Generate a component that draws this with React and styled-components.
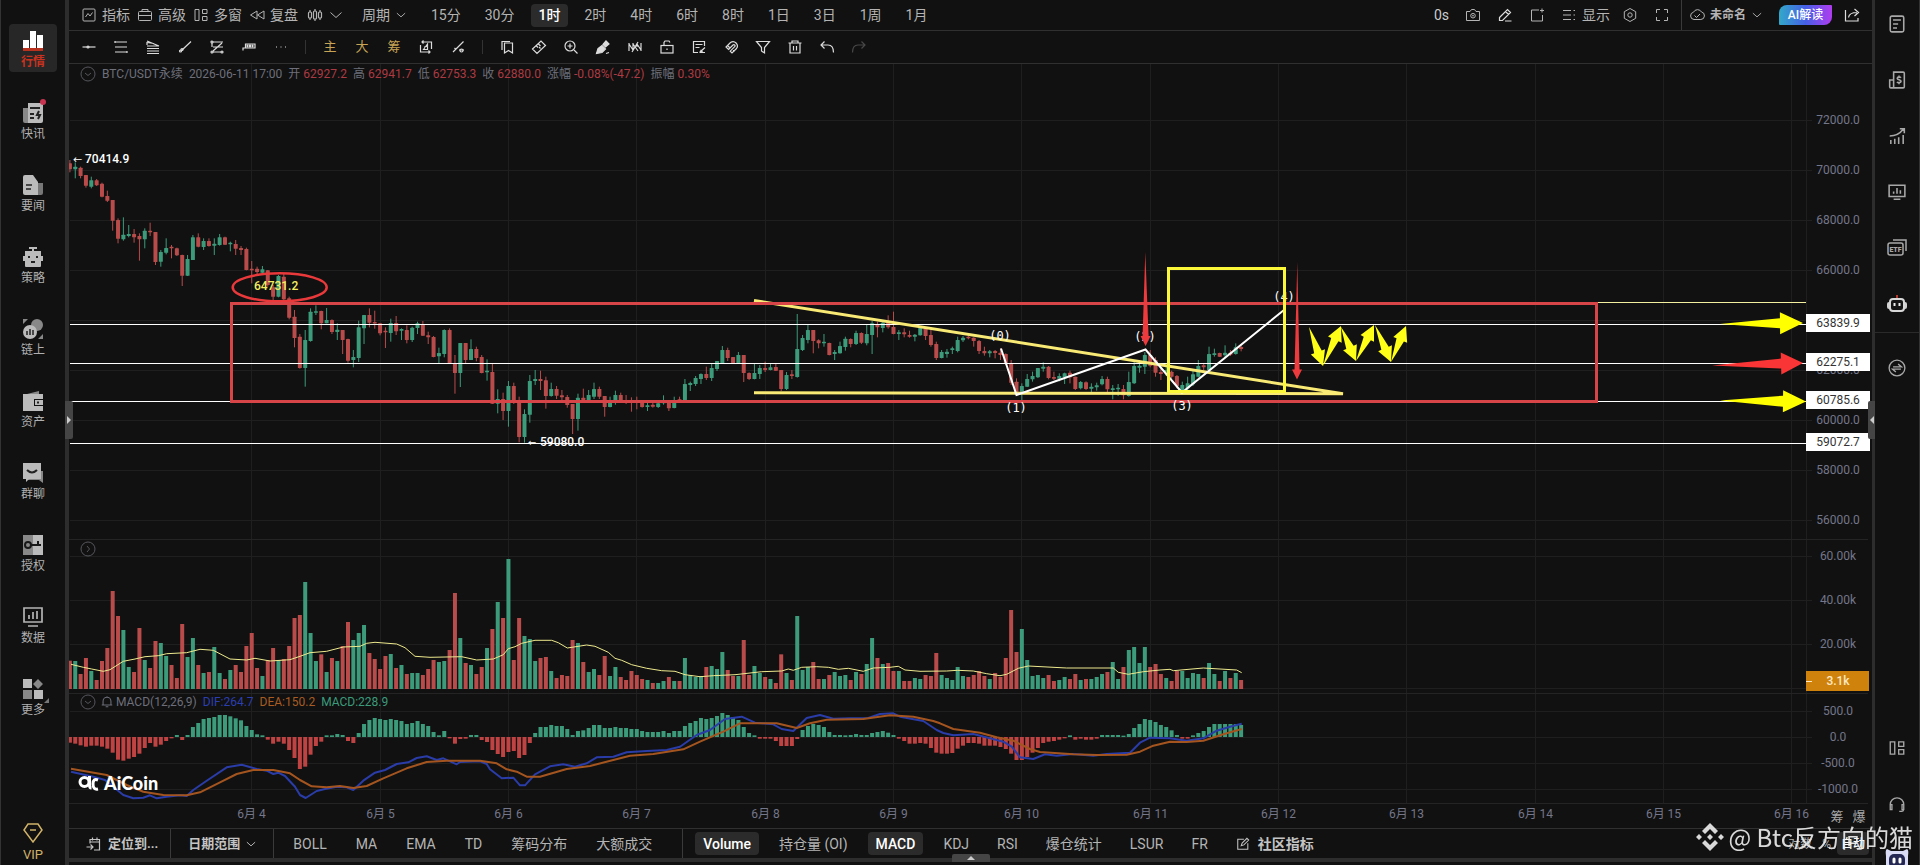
import React from 'react'
import styled, { createGlobalStyle, css } from 'styled-components'

const UP = '#3c9b7b'
const DOWN = '#b94b4b'
const SANS = 'Roboto, "Noto Sans CJK SC", sans-serif'

const GlobalStyle = createGlobalStyle`
    * { box-sizing: border-box; }

    body {
        margin: 0;
        background: #111;
        color: #b4b4b4;
        font-family: ${SANS};
        overflow: hidden;
    }

    button {
        margin: 0;
        padding: 0;
        border: 0;
        background: none;
        color: inherit;
        font: inherit;
        white-space: nowrap;
        cursor: pointer;
    }
`

/* ---------- market data: dir + high,top,bottom,low (3 units per pixel) ---------- */

const CANDLES = `
r480,490,508,517 g487,500,508,535 r500,503,528,535 r525,525,557,563 g530,541,560,565
r537,541,556,558 r548,551,590,592 r572,588,602,606 r600,600,662,692 r655,660,716,730
g652,704,718,722 g675,702,708,712 r687,702,712,728 r700,708,718,782 g685,692,718,745
r668,692,697,708 r696,696,786,795 g750,756,785,800 g715,744,758,763 r735,740,744,775
r743,745,766,768 r764,765,827,858 g765,777,827,828 g705,712,780,780 r700,712,740,742
g715,723,741,750 r715,723,738,740 g715,731,737,765 g702,712,735,737 r710,712,734,735
g725,728,733,754 r720,732,746,765 r738,744,750,765 r743,747,810,811 r783,806,810,850
r800,806,816,823 g798,808,818,825 r810,811,855,860 r855,862,890,903 g825,828,890,892
r820,830,898,905 r890,895,953,958 r930,950,1014,1042 r1002,1010,1104,1106 g990,1020,1104,1160
g925,935,1023,1025 g916,934,938,945 r932,933,970,988 g924,960,970,970 r958,960,996,1002
g970,989,996,1020 r990,990,1020,1062 r1016,1017,1082,1088 g1050,1071,1080,1102 g962,982,1074,1086
g945,945,985,1032 r925,945,968,982 r932,966,970,986 r970,970,1000,1006 r982,992,996,1044
g956,969,999,1025 r948,969,994,1005 g985,987,992,1020 r976,990,1020,1030 g980,983,1020,1026
g965,970,984,1002 r963,973,1007,1008 r995,1006,1012,1032 r1008,1011,1071,1072 g1043,1059,1069,1092
g988,990,1062,1072 r985,990,1089,1091 r1065,1090,1119,1181 g1029,1029,1119,1161 r1029,1029,1080,1092
g1018,1047,1080,1080 r1040,1047,1074,1084 r1065,1071,1119,1120 g1078,1112,1117,1142 r1092,1116,1211,1212
g1168,1197,1211,1240 r1178,1197,1233,1260 g1143,1158,1233,1280 r1148,1158,1206,1212 r1190,1206,1311,1327
g1228,1242,1311,1328 g1125,1143,1244,1268 g1110,1137,1143,1155 r1112,1137,1143,1170 r1130,1141,1188,1226
g1148,1167,1188,1190 r1158,1167,1187,1197 r1170,1186,1192,1208 r1185,1191,1215,1223 r1212,1212,1257,1302
g1181,1193,1257,1292 r1166,1193,1200,1205 g1170,1185,1200,1203 g1148,1167,1190,1197 r1160,1167,1190,1197
r1188,1188,1221,1250 g1190,1206,1221,1222 g1172,1185,1206,1214 r1178,1185,1202,1208 r1185,1200,1206,1212
r1192,1202,1208,1235 r1190,1202,1208,1228 r1200,1206,1221,1223 g1206,1216,1221,1233 r1200,1214,1220,1223
g1205,1210,1221,1224 g1186,1202,1210,1214 r1205,1205,1225,1233 g1190,1200,1224,1225 r1190,1198,1202,1206
g1137,1152,1200,1202 g1145,1149,1155,1173 g1128,1134,1152,1158 g1120,1122,1137,1152 r1100,1122,1134,1140
g1092,1104,1134,1143 g1083,1083,1107,1113 g1038,1050,1089,1091 r1043,1050,1074,1083 r1071,1071,1089,1090
g1056,1065,1089,1091 r1065,1065,1119,1146 r1117,1119,1137,1140 g1092,1119,1137,1138 g1095,1104,1122,1137
r1085,1104,1110,1116 g1090,1102,1110,1111 r1092,1101,1112,1113 r1110,1110,1167,1173 g1116,1125,1167,1170
r1110,1123,1128,1137 g942,1047,1131,1133 g1005,1014,1050,1053 g975,990,1020,1030 r990,990,1023,1060
r1018,1021,1030,1045 g1002,1025,1030,1040 r1028,1029,1065,1066 g1050,1056,1062,1080 g1025,1038,1060,1061
g1010,1016,1041,1052 r1015,1017,1032,1042 g992,999,1032,1035 r997,999,1028,1032 g975,1002,1030,1036
g963,970,1005,1062 r965,972,982,1012 g960,968,984,997 r946,968,982,986 r935,981,1002,1003
g990,997,1002,1020 r985,997,1003,1012 r992,1005,1010,1013 g1002,1004,1010,1024 g980,984,1006,1007
r982,986,1008,1020 r988,1005,1035,1040 r1025,1032,1074,1080 g1050,1056,1074,1075 g1047,1055,1062,1073
g1040,1045,1050,1062 g1010,1020,1053,1057 g1008,1013,1021,1026 r1008,1010,1015,1018 r1012,1013,1023,1040
r1020,1023,1053,1062 r1040,1053,1060,1067 g1050,1054,1060,1072 r1050,1053,1059,1075 r1045,1058,1065,1080
r1060,1062,1092,1095 r1080,1090,1148,1155 r1135,1145,1180,1188 g1150,1158,1175,1200 g1122,1137,1160,1161
g1115,1128,1138,1145 g1104,1104,1132,1134 g1087,1100,1106,1115 r1098,1100,1134,1138 r1115,1131,1136,1140
g1120,1128,1136,1144 g1118,1120,1132,1152 r1112,1118,1132,1150 r1130,1130,1167,1170 g1143,1146,1165,1168
r1144,1147,1167,1170 g1150,1160,1166,1178 g1148,1156,1162,1172 g1128,1137,1153,1156 r1130,1137,1168,1176
g1155,1165,1170,1198 g1152,1163,1168,1188 r1155,1167,1186,1198 g1115,1146,1188,1190 g1086,1098,1150,1152
g1080,1097,1103,1118 g1056,1065,1100,1122 r1050,1065,1097,1102 r1072,1080,1118,1130 r1105,1116,1122,1140
g1100,1110,1118,1128 r1112,1115,1130,1136 r1125,1128,1158,1165 g1145,1155,1172,1178 g1130,1150,1165,1170
g1110,1123,1153,1158 g1080,1098,1130,1132 r1090,1096,1102,1110 g1040,1062,1110,1112 g1046,1060,1065,1070
r1058,1059,1070,1071 g1036,1058,1066,1074 r1050,1058,1064,1068 g1030,1042,1062,1064 r1037,1041,1047,1054
`.trim().split(/\s+/).map(row => ({
    color: row[0] === 'g' ? UP : DOWN,
    y: row.slice(1).split(',').map(n => n / 3)
}))

const VOLUME = `
392 393 432 384 423 450 393 354 183 258 300 411 426 294 390 414 333 339 378 405 444 282 381 324 405 429 426 351 429 447
420 405 426 348 309 414 438 390 354 390 387 348 264 255 156 309 393 373 426 384 393 348 276 330 309 285 369 387 417 378
372 414 405 432 429 429 435 417 390 396 393 360 189 324 399 405 432 411 354 297 216 264 87 390 264 318 327 393 384 381
423 444 435 438 330 339 396 426 417 435 378 438 411 441 450 423 435 447 450 459 459 453 441 453 453 384 435 441 438 411
408 417 366 420 438 438 330 435 408 429 441 447 459 373 429 450 258 420 411 396 447 447 435 426 438 435 450 426 432 402
324 384 402 399 423 423 453 453 444 447 435 438 369 435 444 450 411 438 441 435 423 438 447 429 441 384 240 366 297 390
438 435 444 435 453 450 441 447 432 450 447 447 441 432 426 396 447 411 360 351 399 351 411 402 432 444 453 423 423 444
429 432 444 399 432 453 423 444 429 450
`.trim().split(/\s+/).map(n => (477 - n) / 3)

const HISTOGRAM = `
-17 -20 -25 -29 -26 -26 -29 -35 -47 -68 -71 -65 -60 -50 -33 -18 -29 -23 -12 -4 6 -9 6 30 42 54 57 60 66 66
62 56 50 33 21 8 5 -8 -20 -14 -20 -39 -63 -96 -89 -53 -27 -14 5 5 9 6 -12 -18 12 39 51 57 54 51
54 51 48 39 42 48 39 33 15 5 18 -4 -20 -6 -5 6 6 -9 -15 -39 -51 -60 -45 -42 -63 -54 -18 12 30 30
36 33 33 24 6 18 20 27 36 36 27 27 30 27 27 24 24 18 15 15 15 18 12 18 18 33 42 48 57 54
57 63 72 66 60 51 30 12 5 -5 -5 -5 -12 -27 -27 -27 -6 21 33 39 36 30 15 6 6 5 6 9 6 6
12 15 18 13 6 -5 -12 -20 -20 -18 -20 -33 -47 -50 -50 -48 -35 -26 -18 -18 -20 -26 -26 -26 -30 -36 -50 -69 -69 -60
-47 -33 -18 -14 -12 -8 -4 5 -8 -5 -8 -8 -5 6 6 6 6 4 9 27 39 54 51 45 36 30 20 6 -5 -5
5 12 18 30 39 39 39 39 39 36
`.trim().split(/\s+/).map(n => n / 3)

/* line studies, each a list of segments with its own x origin */
const VOLUME_MA = [
    [0, '213,403 250,412 275,417 310,424 330,419 370,394 405,387 435,380 475,377 500,371 560,368 600,358 640,361 690,387 740,390 765,385 810,393 870,389 900,379 930,368 980,364 1030,351 1080,349 1100,340 1125,337 1190,342 1215,353 1245,379 1290,382 1385,380 1430,390 1480,387 1510,374'],
    [480, '85,356 105,350 125,340 165,331 215,331 235,338 262,354 320,345 345,349 385,367 405,385 425,391 455,404 500,415 545,422 585,424 615,434 660,440 700,437 765,434 845,425 905,423 925,417 940,421 965,412 1010,410 1045,412 1075,418 1105,415 1150,424 1180,414 1230,412 1255,409 1275,420 1320,424 1400,423'],
    [940, '53,421 100,423 140,431 180,437 200,433 235,415 265,408 380,414 520,414 535,427 565,433 610,425 660,420 690,418 700,422 790,414 890,420 905,428']
]

const DIF = [
    [0, '213,725 280,740 315,750 345,775 370,795 400,805 430,803 450,796 470,805 500,800 540,796 560,798 580,780 620,752 680,712 725,704 770,717 800,722 820,732 835,728 855,738 885,770 900,795 917,804 950,783 975,777 1010,770 1040,772 1060,780 1090,752 1125,728 1155,720 1190,702 1225,697 1250,684 1280,679 1310,690 1330,685 1370,703 1380,696'],
    [480, '0,694 20,702 30,718 65,745 100,743 120,766 135,766 165,733 210,709 250,703 285,710 320,700 350,682 400,680 440,667 500,663 560,660 600,650 650,615 690,600 735,567 785,560 825,578 880,583 905,597 940,603 980,564 1020,555 1060,566 1110,565 1165,564 1200,552 1240,550 1260,560 1330,573 1370,600'],
    [940, '10,609 40,616 100,612 150,625 190,635 215,650 240,682 280,687 315,673 350,677 400,672 460,677 500,672 570,668 600,638 630,623 690,625 740,632 790,625 830,602 870,590 905,581']
]

const DEA = [
    [0, '213,716 320,735 380,765 430,785 490,795 560,796 600,787 660,757 710,732 760,720 820,720 870,730 900,750 935,769 980,772 1020,768 1060,774 1100,768 1150,745 1220,715 1280,696 1340,692'],
    [480, '0,692 50,700 80,718 110,725 140,740 180,740 260,717 330,708 400,690 450,677 520,672 610,658 660,635 730,605 780,580 890,580 950,594 990,580 1040,569 1150,567 1230,556 1300,560 1360,573'],
    [940, '0,580 40,597 120,608 170,622 220,632 270,657 300,666 400,673 470,675 560,674 600,665 640,647 690,635 740,636 790,632 850,613 905,597']
]

const toPoints = segments => segments
    .map(([origin, list]) => list.split(' ')
        .map(pair => {
            const [x, y] = pair.split(',')
            return `${(origin + x / 3).toFixed(1)},${(530 + y / 3).toFixed(1)}`
        })
        .join(' '))
    .join(' ')

const barX = index => 69.9 + index * 5.348
const DAYS = Array.from({ length: 13 }, (_, i) => ({ label: `6月 ${i + 4}`, x: Math.round(251.3 + i * 128.35) + 0.5 }))
const AXIS_X = 1806.5
const LABEL_X = 1838

/* ---------- icons, all on a 16 x 16 grid ---------- */

const ICONS = {
    indicator: <><rect x="2" y="2" width="12" height="12" rx="1"/><path d="M4.5 10 7 6.5 9 9l2.5-3.5"/></>,
    briefcase: <><rect x="1.500" y="4.500" width="13" height="9" rx="1"/><path d="M5 4.500V2.500h6v2M1.500 8.500h13"/></>,
    windows: <><path d="M2 2.500h4v11H2zM9.500 2.500H14v4H9.500zM9.500 9.500H14v4H9.500z"/></>,
    rewind: <path d="M8 4 1.500 8 8 12zM15 4 8.500 8l6.500 4z"/>,
    candles: <><rect x="1.500" y="5" width="3" height="6" rx="1"/><rect x="6.500" y="4" width="3" height="8" rx="1"/><rect x="11.500" y="5" width="3" height="6" rx="1"/><path d="M3 3v2m0 6v2M8 2v2m0 8v2M13 3v2m0 6v2"/></>,
    chevron: <path d="m2.500 5.500 5.500 5 5.500-5"/>,
    camera: <><path d="M1.500 4.500H5l1.500-2h3l1.500 2h3.500v9h-13z"/><circle cx="8" cy="8.700" r="2.300"/><circle cx="8" cy="8.700" r=".5"/></>,
    pen: <path d="m2.500 10.500 8-8 3 3-8 8h-3zM8.500 4.500l3 3M8 14h6.500"/>,
    newNote: <path d="M10 3H2.500v11h11V8M13 1.500v4M11 3.500h4"/>,
    list: <path d="M2 3.500h8M2 8h8M2 12.500h8M12.500 3.500H14M12.500 8H14M12.500 12.500H14"/>,
    hexagon: <><path d="m8 1.500 5.700 3.200v6.600L8 14.500l-5.700-3.200V4.700z"/><circle cx="8" cy="8" r="2.200"/></>,
    expand: <path d="M2.500 6V2.500H6M10 2.500h3.500V6M13.500 10v3.500H10M6 13.500H2.500V10"/>,
    cloud: <><path d="M5 12.500a3.700 3.700 0 0 1-.5-7.300 4.500 4.500 0 0 1 8-.2 3.800 3.800 0 0 1-.7 7.500z"/><path d="m5.500 8.500 2 2 3.500-3.500"/></>,
    share: <path d="M1.500 3v11H14v-3M4.500 10.500C5 7 8 5.500 13 5.500M10.500 2l4 3.500-4 3.500"/>,
    cross: <><path d="M1.500 8h13"/><circle cx="7" cy="8" r="1"/></>,
    hlines: <path d="M2 3h12M2 8h12M2 13h12M2 2v2M14 12v2"/>,
    fib: <path d="M2 3.500 9 4.500M2 3v3M2 7h12M2 9.500h12M2 12h12M2 14.500h12M2 2l12 5"/>,
    trend: <><path d="M4 12 14 2.500"/><circle cx="3.500" cy="12" r="1"/><circle cx="5" cy="10.500" r="1"/></>,
    channel: <><path d="M4 3h10M4 13h8M4 8h10M4 12l9-8M3 4v4"/><circle cx="3" cy="3" r="1"/><circle cx="3" cy="13" r="1"/><circle cx="13" cy="13" r="1"/></>,
    ruler2: <><path d="M2 11.500V9h12V5H4.500v4"/><path d="M6.500 8.500v-3M9 8.500v-3M11.500 8.500v-3" strokeWidth="2"/></>,
    dots: <path d="M3 8h1M7.500 8h1M12 8h1"/>,
    trade: <><path d="M4 3h9.500v7M12 13H2.500V6M5.500 1.500 4 3l1.500 1.500M10.500 14.500l1.500-1.500-1.500-1.500"/><path d="M5.500 10.500 9.500 5v5.500zM6 8l4-1"/></>,
    cut: <><path d="M3 13 13.500 2.500M4.500 9l1.500 1.500M9 11h5"/><circle cx="11.500" cy="11.500" r="1.500"/></>,
    bookmark: <><path d="M5.500 4H13.500v10l-4-2.500-4 2.500z"/><path d="M3 11V2.500h8"/></>,
    measure: <path d="m1.500 10 8.500-8 4.500 4.500-8.500 8zM5.500 7l1.500 1.500M7.500 5l2 2M9.500 9.500 8 8"/>,
    zoomIn: <><circle cx="7" cy="7" r="5"/><path d="m11 11 3.500 3.500M7 4.500v5M4.500 7h5"/></>,
    brush: <path d="m1.500 14.500 1.500-5 4-3 3.500 3.500-3.500 3.500zM8 5.500l3-3.500 3 3-3.500 3zM11 14.500l3-1" fill="currentColor"/>,
    hideDraw: <path d="M2 4v8M2 5l4 6M6 4v8M6 5l5 7M10 4v4M10 5l4 6M14 4v8M5 13 11 3"/>,
    lock: <><rect x="2" y="6.500" width="12" height="7.500"/><path d="M5 6.500V3.500L6 2h4l1 1.500M8 9.500v1.500"/></>,
    noteEdit: <path d="M7 13.500H2.500v-11h11V7M4.500 5.500h7M4.500 8.500h4M8.500 13.500l5.500-5M9 13.500h5M9.500 11l2 2"/>,
    magnet: <path d="M5.500 10.500 10 6a1.200 1.200 0 0 1 1.700 1.700L7.200 12.200l1.800 1.800 4.500-4.500A4.300 4.300 0 0 0 7.500 3.500L3 8zM4.500 6.500l2 2M10 11.500l1.500 1"/>,
    filter: <path d="M1.500 2.500h13l-5 6v5.500l-3-2V8.500z"/>,
    trash: <path d="M1.500 4h13M5 4V2h6v2M3 4v10h10V4M6.500 7v4.500M9.500 7v4.500"/>,
    undo: <path d="M5.500 2.500 2 6l3.500 3.500M2.500 6H9c3 0 5.500 2.500 5.500 7.500"/>,
    redo: <path d="M10.500 2.500 14 6l-3.500 3.500M13.500 6H7C4 6 1.500 8.500 1.500 13.500"/>,
    locate: <path d="M5 7.500V3.500h9.500v10.500H9M5 6h9.500M7.500 1.500v3M12 1.500v3M1.500 11H8M5.500 8.500 8 11l-2.500 2.500"/>,
    edit: <path d="M9 2.500H2v11.500h11.500V7M6 10l1-3 5.500-5.500 2 2L9 9z"/>,
    bell: <path d="M2 11.500h12M3.500 11.500V7a4.500 4.500 0 0 1 9 0v4.500M6.500 13.500h3M8 1.500v1"/>,
    document: <><rect x="2" y="1" width="12" height="14" rx="1.500"/><path d="M4.500 4.500h7M4.500 8H9M4.500 11.500h3.500"/></>,
    dollar: <><path d="M5 1h8.500c.6 0 1 .4 1 1v12c0 .6-.4 1-1 1H2.500c-.6 0-1-.4-1-1V8H5zM5 8v7"/><path d="M11.500 6c-.5-.8-3.300-.9-3.300.6 0 1.600 3.400.9 3.400 2.600 0 1.500-3 1.400-3.600.4M9.800 4v1M9.800 10.700v1"/></>,
    growth: <path d="M1.500 8c5 0 9-2 12-6M10.500 1.500h4v4M2.500 15v-3.500M6 15v-4.500M9.500 15V9M13.500 15V7"/>,
    monitor: <path d="M1 2h14v10H1zM5 14.500h6M5 9.500v-2M8 9.500v-5M11 9.500v-3"/>,
    swap: <><circle cx="8" cy="8" r="7"/><path d="M4.500 7H12L9 4.500M11.500 9H4l3 2.500"/></>,
    headset: <path d="M3.500 13V8.500H2A6 6 0 0 1 14 8.500V13a2 2 0 0 1-2 1.500h-2M3.500 8.500v4.500H2V8M14 8.500h-1.500V13H14"/>
}

const Svg = styled.svg`
    flex: none;
    display: block;
    fill: none;
    stroke: currentColor;
    width: ${props => props.$size || 16}px;
    height: ${props => props.$size || 16}px;
`

const Icon = ({ name, size, weight = 1.2 }) => (
    <Svg viewBox="0 0 16 16" $size={size} strokeWidth={weight} aria-hidden="true">{ICONS[name]}</Svg>
)

/* ---------- frame ---------- */

const Page = styled.div`
    display: grid;
    grid-template-columns: 65px 4px minmax(0, 1fr) 3px 45px;
    height: 100vh;
    overflow: hidden;
`

const Splitter = styled.div`
    position: relative;
    background: #2d2d2d;
`

const Handle = styled.button`
    position: absolute;
    display: flex;
    align-items: center;
    justify-content: center;
    background: #454545;
    z-index: 2;

    ${props => props.$side === 'left' && css`left: 0; top: 401px; width: 8px; height: 38px; border-radius: 0 2px 2px 0;`}
    ${props => props.$side === 'right' && css`right: 0; top: 401px; width: 7px; height: 38px; border-radius: 2px 0 0 2px;`}
    ${props => props.$side === 'bottom' && css`left: 883px; bottom: 0; width: 38px; height: 8px; border-radius: 2px 2px 0 0;`}

    > svg {
        width: 8px;
        height: 8px;
        fill: #ccc;
        flex: none;
    }
`

/* ---------- left navigation ---------- */

const Sidebar = styled.nav`
    display: flex;
    flex-direction: column;
    align-items: center;
    gap: 24px;
    padding: 24px 0 2px;
    border-left: 1px solid #333;
`

const NavItem = styled.button`
    position: relative;
    display: flex;
    flex-direction: column;
    align-items: center;
    gap: 4px;
    width: 48px;
    height: 48px;
    padding-top: 7px;
    border-radius: 4px;
    font-size: 12px;
    line-height: 15px;
    color: ${props => props.$active ? '#c8321f' : '#b0b0b0'};
    font-weight: ${props => props.$active ? 700 : 400};
    background: ${props => props.$active ? '#272727' : 'none'};

    > svg {
        width: 20px;
        height: 20px;
        flex: none;
    }
`

const Dot = styled.span`
    position: absolute;
    top: 3px;
    right: 11px;
    width: 6px;
    height: 6px;
    border-radius: 3px;
    background: #c93550;
`

const Corner = styled.span`
    position: absolute;
    right: 8px;
    top: 26px;
    border-style: solid;
    border-width: 0 0 5px 5px;
    border-color: transparent transparent #777;
`

const Vip = styled(NavItem)`
    margin-top: auto;
    height: 40px;
    padding-top: 0;
    font-size: 13px;
    color: #d0b269;
`

const NAV = [
    ['行情', <><path fill="#fff" d="M0 9h6v8H0zM7 0h6v17H7zM14 4h6v13h-6z"/><path fill="#b8321f" d="M0 17h20v3H0z"/></>],
    ['快讯', <><path fill="#888" d="M0 5h5v15H2a2 2 0 0 1-2-2z"/><path fill="#bbb" d="M5 0h15v18a2 2 0 0 1-2 2H5z"/><path stroke="#222" strokeWidth="2" d="M7 5h10M7 11h4M7 15h4M16 8l-2 4h3l-2 4" fill="none"/></>],
    ['要闻', <><path fill="#777" d="M14 8h6v10a2 2 0 0 1-2 2h-4z"/><path fill="#bbb" d="M0 2a2 2 0 0 1 2-2h8l5 7v13H2a2 2 0 0 1-2-2z"/><path stroke="#222" strokeWidth="1.600" d="M3 10h6M3 14h5"/></>],
    ['策略', <><path stroke="#bbb" strokeWidth="2" d="M6 1h8M10 1v3"/><path fill="#bbb" d="M2 4h16v5h2v5h-2v5a1 1 0 0 1-1 1H3a1 1 0 0 1-1-1v-5H0V9h2z"/><path stroke="#222" strokeWidth="2" d="M6 9v2M14 9v2M8 15h4"/></>],
    ['链上', <><circle cx="14" cy="6" r="6" fill="#888"/><path fill="#888" d="M0 0h5L0 5zM20 20h-5l5-5z"/><circle cx="7" cy="13" r="7" fill="#bbb"/><path stroke="#222" strokeWidth="1.500" d="M4 16v-4M7 16v-6M10 16v-5"/></>],
    ['资产', <><path fill="#888" d="M4 3l12-3v5H4z"/><path fill="#bbb" d="M0 3h20v5h-9v7h9v5H0z"/><path fill="#bbb" d="M12 9h8v5h-8z"/><path stroke="#222" strokeWidth="2" d="M14 11.500h2"/></>],
    ['群聊', <><path fill="#888" d="M5 8h15v12l-4-3H5z"/><path fill="#bbb" d="M0 0h18v16H6l-3 3v-3H0z"/><path stroke="#222" strokeWidth="2" fill="none" d="M4 7q5 5 10 0"/></>],
    ['授权', <><path fill="#888" d="M0 0h10v20H0z"/><path fill="#bbb" d="M10 0h10v20H10z"/><circle cx="5" cy="10" r="3" fill="none" stroke="#181818" strokeWidth="2"/><path stroke="#181818" strokeWidth="2" d="M8 10h10M15 10V6"/></>],
    ['数据', <path fill="none" stroke="#b4b4b4" strokeWidth="1.700" d="M1 1h18v14H1zM5 19h10M6 12V8M10 12V5M14 12V4"/>],
    ['更多', <><path fill="#bbb" d="M0 0h9v9H0zM11 11h9v9h-9z"/><path fill="#888" d="M0 11h9v9H0zM15 0l5 5-5 5-5-5z"/></>]
]

const LeftNav = () => (
    <Sidebar>
        {NAV.map(([label, art], i) => (
            <NavItem key={label} $active={i === 0}>
                <svg viewBox="0 0 20 20" aria-hidden="true">{art}</svg>
                <span>{label}</span>
                {i === 1 && <Dot/>}
                {i === 9 && <Corner/>}
            </NavItem>
        ))}
        <Vip>
            <svg viewBox="0 0 20 20" aria-hidden="true">
                <path d="M5 1h10l4 6-9 12L1 7zM7 7h6" fill="none" stroke="currentColor" strokeWidth="1.500"/>
            </svg>
            <span>VIP</span>
        </Vip>
    </Sidebar>
)

/* ---------- toolbars ---------- */

const Main = styled.main`
    display: flex;
    flex-direction: column;
    min-width: 0;
`

const TopBar = styled.header`
    display: flex;
    align-items: center;
    height: 31px;
    flex: none;
    padding-right: 12px;
    border-bottom: 1px solid #303030;
    font-size: 14px;
    line-height: 20px;
`

const Tool = styled.button`
    display: flex;
    align-items: center;
    gap: ${props => props.$gap || 5}px;
    margin-left: ${props => props.$before || 0}px;
    color: ${props => props.$color || '#b4b4b4'};
`

const Small = styled(Tool)`
    font-size: 12px;
    font-weight: 700;
`

const Periods = styled.div`
    display: flex;
    gap: 8px;
    margin-left: 16px;
`

const Pill = styled.button`
    height: 23px;
    padding: 0 8px;
    border-radius: 4px;
    color: ${props => props.$active ? '#fff' : '#b4b4b4'};
    background: ${props => props.$active ? '#2b2b2b' : 'none'};
    font-weight: ${props => props.$active ? 500 : 400};
`

const Spacer = styled.div`
    flex: 1;
`

const Rule = styled.span`
    width: 1px;
    height: 30px;
    margin-left: ${props => props.$before || 0}px;
    background: #3a3a3a;
`

const AiButton = styled.button`
    width: 53px;
    height: 20px;
    margin: 0 12px 0 16px;
    border-radius: 8px 1px 8px 1px;
    background: linear-gradient(90deg, #33a9c9, #4560e6 50%, #b03cf0);
    color: #fff;
    font-size: 12px;
    font-weight: 500;
`

const DrawBar = styled.div`
    display: flex;
    align-items: center;
    height: 33px;
    flex: none;
    padding-left: 4px;
    border-bottom: 1px solid #303030;
`

const DrawTool = styled.button`
    display: flex;
    justify-content: center;
    width: 32px;
    font-size: 13px;
    line-height: 16px;
    color: ${props => props.$color || '#dcdcdc'};
`

const Gap = styled.span`
    width: 17px;
    height: 14px;
    background: linear-gradient(#333, #333) center / 1px 100% no-repeat;
`

const PERIODS = ['15分', '30分', '1时', '2时', '4时', '6时', '8时', '1日', '3日', '1周', '1月']

const Header = () => (
    <TopBar>
        <Tool $before={12}><Icon name="indicator" weight={1}/>指标</Tool>
        <Tool $before={7}><Icon name="briefcase" weight={1}/>高级</Tool>
        <Tool $before={7}><Icon name="windows" weight={1}/>多窗</Tool>
        <Tool $before={7}><Icon name="rewind" weight={1}/>复盘</Tool>
        <Tool $before={9} $gap={5} aria-label="K线样式"><Icon name="candles" weight={1.2}/><Icon name="chevron" weight={1}/></Tool>
        <Tool $before={18}>周期<Icon name="chevron" size={12}/></Tool>
        <Periods>
            {PERIODS.map(period => <Pill key={period} $active={period === '1时'}>{period}</Pill>)}
        </Periods>
        <Spacer/>
        <Tool $color="#ccc">0s</Tool>
        <Tool $before={16} aria-label="截图"><Icon name="camera" weight={1}/></Tool>
        <Tool $before={16} $color="#ddd" aria-label="画笔"><Icon name="pen"/></Tool>
        <Tool $before={16} aria-label="新建"><Icon name="newNote" weight={1}/></Tool>
        <Tool $before={16}><Icon name="list" weight={1}/>显示</Tool>
        <Tool $before={12} aria-label="设置"><Icon name="hexagon" weight={1}/></Tool>
        <Tool $before={16} aria-label="全屏"><Icon name="expand" weight={1}/></Tool>
        <Rule $before={11}/>
        <Small $before={7} $gap={5}><Icon name="cloud" weight={1}/>未命名<Icon name="chevron" size={12}/></Small>
        <AiButton>AI解读</AiButton>
        <Tool $color="#ddd" aria-label="分享"><Icon name="share"/></Tool>
    </TopBar>
)

const Drawing = ({ names }) => names.map(name => (
    <DrawTool key={name} aria-label={name} $color={name === 'redo' ? '#484848' : undefined}><Icon name={name}/></DrawTool>
))

const DrawingTools = () => (
    <DrawBar>
        <Drawing names={['cross', 'hlines', 'fib', 'trend', 'channel', 'ruler2', 'dots']}/>
        <Gap/>
        {['主', '大', '筹'].map(label => <DrawTool key={label} $color="#c6a355">{label}</DrawTool>)}
        <Drawing names={['trade', 'cut']}/>
        <Gap/>
        <Drawing names={['bookmark', 'measure', 'zoomIn', 'brush', 'hideDraw', 'lock', 'noteEdit', 'magnet', 'filter', 'trash', 'undo', 'redo']}/>
    </DrawBar>
)

/* ---------- chart ---------- */

const Chart = styled.section`
    display: flex;
    flex-direction: column;
    flex: 1;
    min-height: 0;
`

const Pane = styled.div`
    position: relative;
    flex: ${props => props.$share} ${props => props.$share} 0;
    min-height: 0;

    > svg {
        display: block;
        width: 100%;
        height: 100%;
        font-size: 12px;
    }
`

const Legend = styled.div`
    position: absolute;
    top: ${props => props.$top}px;
    left: 11px;
    display: flex;
    align-items: center;
    gap: 6px;
    font-size: 12px;
    line-height: 16px;
    color: #6d6f7b;
    white-space: nowrap;
`

const Fold = styled.button`
    width: 16px;
    height: 16px;
    color: #55565c;
`

const Quote = styled.span`
    > b {
        margin-left: 3px;
        font-weight: 400;
        color: #ad3a42;
    }
`

const Study = styled.span`
    color: ${props => props.$color};
`

const AlertName = styled.span`
    display: flex;
    align-items: center;
    gap: 2px;
    margin-left: -2px;
`

const QUOTES = [
    ['开', '62927.2'], ['高', '62941.7'], ['低', '62753.3'], ['收', '62880.0'],
    ['涨幅', '-0.08%(-47.2)'], ['振幅', '0.30%']
]

const FoldButton = ({ open }) => (
    <Fold aria-label={open ? '收起' : '展开'}>
        <Svg viewBox="0 0 16 16">
            <circle cx="8" cy="8" r="7"/>
            <path d={open ? 'm5 7 3 2.500L11 7' : 'm7 5 2.500 3L7 11'}/>
        </Svg>
    </Fold>
)

const Grid = ({ top, bottom, rows }) => (
    <g stroke="#1f1f1f">
        {DAYS.map(({ x }) => <path key={x} d={`M${x} ${top}V${bottom}`}/>)}
        <path d={`M${AXIS_X} ${top}V${bottom}`}/>
        {rows.map(y => <path key={y} d={`M70 ${y}H1812`}/>)}
        <path d={`M69 ${bottom - 0.5}H1868`} stroke="#242424"/>
    </g>
)

const AxisLabels = ({ labels }) => (
    <g fill="#74768a" textAnchor="middle">
        {labels.map(([text, y]) => <text key={text} x={LABEL_X} y={Math.floor(y) + 4}>{text}</text>)}
    </g>
)

const Tag = ({ y, children }) => (
    <g>
        <rect x="1806" y={y - 9} width="64" height="18" fill="#fff"/>
        <text x={LABEL_X} y={y + 4} fill="#333" textAnchor="middle">{children}</text>
    </g>
)

// wedge-shaped arrow: pointed tail, body widening towards the head
const Arrow = ({ from: [x1, y1], to: [x2, y2], head, wide, body, color }) => {
    const length = Math.hypot(x2 - x1, y2 - y1)
    const ux = (x2 - x1) / length
    const uy = (y2 - y1) / length
    const at = (back, side) => `${x2 - ux * back - uy * side},${y2 - uy * back + ux * side}`
    const half = wide / 2
    return (
        <polygon
            fill={color}
            points={[
                `${x1},${y1}`, at(head, body / 2), at(head, half), `${x2},${y2}`, at(head, -half), at(head, -body / 2)
            ].join(' ')}
        />
    )
}

const PRICES = Array.from({ length: 9 }, (_, i) => [`${72000 - i * 2000}.0`, 120.5 + i * 50])

const WAVES = [['(0)', 1000, 336], ['(1)', 1016, 408], ['(2)', 1145, 337], ['(3)', 1182, 406], ['(4)', 1284, 297]]

const ZIGZAG = [
    [[1309, 327], [1323, 366]], [[1323, 366], [1341, 326]], [[1341, 327], [1356, 361]],
    [[1356, 361], [1374, 325]], [[1375, 325], [1391, 362]], [[1391, 362], [1406, 326]]
]

const PricePane = () => (
    <Pane $share={476}>
        <svg viewBox="69 64 1803 476">
            <Grid top={64} bottom={540} rows={PRICES.map(([, y]) => y)}/>
            <AxisLabels labels={PRICES}/>
            {CANDLES.map(({ color, y: [high, top, bottom, low] }, i) => (
                <g key={i} fill={color}>
                    <rect x={barX(i) - 0.5} y={high} width="1" height={low - high}/>
                    <rect x={barX(i) - 2} y={top} width="4" height={Math.max(bottom - top, 1.5)} rx=".5"/>
                </g>
            ))}
            <g stroke="#fff">
                <path d="M70 324.500H1806M70 363.500H1806M70 401.500H1806M70 443.500H1806"/>
            </g>
            <path d="M1597 302.500H1806" stroke="#f3f0a0"/>
            <g fill="#fff" fontWeight="500">
                <text x="73" y="163" fontSize="9">←</text>
                <text x="85" y="163">70414.9</text>
                <text x="528" y="446" fontSize="8">←</text>
                <text x="540" y="446">59080.0</text>
            </g>
            <text x="254" y="290" fill="#f1ee62" fontWeight="500">64731.2</text>
            <ellipse cx="279.700" cy="287.300" rx="47" ry="14" fill="none" stroke="#e9393b" strokeWidth="2.500"/>
            <path d="M754 300.500 1343 393.700 754 392.700" fill="none" stroke="#f8ea74" strokeWidth="3"/>
            <rect x="231.500" y="303.500" width="1365" height="98" fill="none" stroke="#d84548" strokeWidth="3"/>
            <g fill="#fff" textAnchor="middle" fontFamily="DejaVu Sans Mono, monospace" fontSize="12">
                {WAVES.map(([text, x, y]) => <text key={text} x={x} y={y + 4}>{text}</text>)}
            </g>
            <path d="M1001 348.500 1016.500 395 1145.500 349.500 1182 392.500 1284 310" fill="none" stroke="#fff" strokeWidth="2"/>
            <rect x="1168.500" y="268.500" width="116" height="123" fill="none" stroke="#fbf83a" strokeWidth="3"/>
            <Arrow from={[1145.300, 252]} to={[1145.600, 346]} head={10} wide={10} body={6} color="#ec3a3d"/>
            <Arrow from={[1297.300, 262]} to={[1297, 379.500]} head={10} wide={10} body={5} color="#ec3a3d"/>
            {ZIGZAG.map(([from, to], i) => (
                <Arrow key={i} from={from} to={to} head={15} wide={15} body={8} color="#ffff17"/>
            ))}
            <Arrow from={[1720, 324]} to={[1803, 323]} head={23} wide={22} body={10} color="#ffff00"/>
            <Arrow from={[1712, 365.500]} to={[1803, 363]} head={22} wide={22} body={10} color="#fa3535"/>
            <Arrow from={[1720, 400.500]} to={[1806, 401.500]} head={23} wide={22} body={11} color="#ffff00"/>
            <Tag y={323}>63839.9</Tag>
            <Tag y={362}>62275.1</Tag>
            <Tag y={400}>60785.6</Tag>
            <Tag y={442}>59072.7</Tag>
        </svg>
        <Legend $top={2}>
            <FoldButton open/>
            <span>BTC/USDT永续</span>
            <span>2026-06-11 17:00</span>
            {QUOTES.map(([label, value]) => <Quote key={label}>{label}<b>{value}</b></Quote>)}
        </Legend>
    </Pane>
)

const VolumePane = () => (
    <Pane $share={154}>
        <svg viewBox="69 540 1803 154">
            <Grid top={540} bottom={694} rows={[556.5, 600.5, 644.5, 688.5]}/>
            <AxisLabels labels={[['60.00k', 556], ['40.00k', 600], ['20.00k', 644]]}/>
            {VOLUME.map((height, i) => (
                <rect key={i} x={barX(i) - 2} y={689 - height} width="4" height={height} fill={CANDLES[i].color}/>
            ))}
            <polyline points={toPoints(VOLUME_MA)} fill="none" stroke="#eeea8e"/>
            <rect x="1806" y="671" width="63" height="20" fill="#cf830c"/>
            <path d="M1806 681.500h6" stroke="#ffe9c4"/>
            <text x={LABEL_X} y="685" fill="#ffe9c4" fontWeight="500" textAnchor="middle">3.1k</text>
        </svg>
        <Legend $top={1}><FoldButton/></Legend>
    </Pane>
)

const MacdPane = () => (
    <Pane $share={110}>
        <svg viewBox="69 694 1803 110">
            <Grid top={694} bottom={804} rows={[711.5, 737.5, 763.5, 789.5]}/>
            <AxisLabels labels={[['500.0', 711], ['0.0', 737], ['-500.0', 763], ['-1000.0', 789]]}/>
            {HISTOGRAM.map((value, i) => (
                <rect
                    key={i}
                    x={barX(i) - 2}
                    y={value > 0 ? 737 - value : 737}
                    width="4"
                    height={Math.abs(value)}
                    fill={value > 0 ? UP : '#c04343'}
                />
            ))}
            <g fill="none" strokeWidth="2" strokeLinejoin="round">
                <polyline points={toPoints(DIF)} stroke="#2a3ca8"/>
                <polyline points={toPoints(DEA)} stroke="#a4551f"/>
            </g>
            <g fill="none" stroke="#fff" strokeWidth="3">
                <circle cx="84.500" cy="782" r="4.500"/>
                <path d="M89.500 776v9q0 3 2 3M98 780q-5-2-5 4t5 5"/>
            </g>
            <text x="104" y="790" fill="#fff" fontFamily="Lato, sans-serif" fontSize="18" fontWeight="900">AiCoin</text>
        </svg>
        <Legend $top={0}>
            <FoldButton open/>
            <AlertName><Icon name="bell" size={14}/>MACD(12,26,9)</AlertName>
            <Study $color="#2c3fb0">DIF:264.7</Study>
            <Study $color="#a85c24">DEA:150.2</Study>
            <Study $color="#3c9b7b">MACD:228.9</Study>
        </Legend>
    </Pane>
)

const TimeAxis = () => (
    <Pane $share={24}>
        <svg viewBox="69 804 1803 24">
            <g fill="#74768a" textAnchor="middle">
                {DAYS.map(({ label, x }) => <text key={label} x={x} y="818">{label}</text>)}
            </g>
            <g fill="#a5a5a5" fontSize="13" textAnchor="middle">
                <text x="1837" y="821">筹</text>
                <text x="1859" y="821">爆</text>
            </g>
        </svg>
    </Pane>
)

/* ---------- bottom bar ---------- */

const BottomBar = styled.footer`
    display: flex;
    align-items: center;
    height: 30px;
    flex: none;
    border-top: 1px solid #303030;
    font-size: 14px;
    line-height: 20px;
`

const Group = styled.div`
    display: flex;
    gap: ${props => props.$gap}px;
    padding: 0 ${props => props.$end || 0}px 0 ${props => props.$start}px;
`

const Strong = styled(Tool)`
    font-size: ${props => props.$font || 13}px;
    font-weight: 700;
    color: #c4c4c4;
`

const Scale = styled.div`
    display: flex;
    gap: 2px;
    padding-right: 3px;
    font-size: 12px;

    > button { padding: 0 4px; }
`

const Floor = styled.div`
    position: relative;
    height: 4px;
    flex: none;
    margin-bottom: 3px;
    background: #2d2d2d;
`

const OVERLAYS = ['BOLL', 'MA', 'EMA', 'TD', '筹码分布', '大额成交']
const STUDIES = ['Volume', '持仓量 (OI)', 'MACD', 'KDJ', 'RSI', '爆仓统计', 'LSUR', 'FR']

const Footer = () => (
    <BottomBar>
        <Strong $before={16} $gap={7}><Icon name="locate"/>定位到...</Strong>
        <Rule $before={12}/>
        <Strong $before={17} $gap={5}>日期范围<Icon name="chevron" size={12}/></Strong>
        <Rule $before={16}/>
        <Group $start={11} $end={22} $gap={13}>
            {OVERLAYS.map(name => <Pill key={name}>{name}</Pill>)}
        </Group>
        <Rule/>
        <Group $start={12} $gap={12}>
            {STUDIES.map(name => <Pill key={name} $active={name === 'Volume' || name === 'MACD'}>{name}</Pill>)}
        </Group>
        <Strong $before={20} $gap={8} $font={14}><Icon name="edit" size={14}/>社区指标</Strong>
        <Spacer/>
        <Scale>
            <Pill>对数</Pill>
            <Pill>%</Pill>
            <Pill $active>自动</Pill>
        </Scale>
    </BottomBar>
)

/* ---------- right rail ---------- */

const Rail = styled.aside`
    display: flex;
    flex-direction: column;
    align-items: center;
    border-right: 1px solid #333;
    color: #a8a8a8;
`

const RailButton = styled.button`
    display: flex;
    align-items: center;
    justify-content: center;
    flex: none;
    width: 100%;
    height: 56px;

    &:first-child {
        height: 52px;
        padding-bottom: 4px;
    }
`

const RailLine = styled.hr`
    width: 100%;
    height: 1px;
    margin: 0 0 7px;
    border: 0;
    background: #2a2a2a;
`

const Robot = styled.button`
    flex: none;
    height: 17px;
    margin-top: 16px;
    overflow: hidden;
    line-height: 0;
`

const RightRail = () => (
    <Rail>
        {['document', 'dollar', 'growth', 'monitor'].map(name => (
            <RailButton key={name} aria-label={name}><Icon name={name} size={18} weight={1.4}/></RailButton>
        ))}
        <RailButton aria-label="ETF">
            <Svg viewBox="0 0 20 20" $size={20} strokeWidth="1.500">
                <path d="M6 2h13v11"/>
                <rect x="1" y="5" width="15" height="12" rx="2"/>
                <text x="8.500" y="13.500" textAnchor="middle" fontSize="7" fontWeight="900" fill="currentColor" stroke="none">ETF</text>
            </Svg>
        </RailButton>
        <RailButton aria-label="机器人">
            <Svg viewBox="0 0 20 20" $size={20}>
                <path d="M10 1v4" stroke="#b5382c" strokeWidth="2"/>
                <rect x="0" y="8" width="20" height="7" rx="2" fill="#d0d0d0" stroke="none"/>
                <rect x="3" y="5" width="14" height="12" rx="3" fill="#151515" stroke="#d8d8d8" strokeWidth="2"/>
                <path d="M7.500 9v3M12.500 9v3" stroke="#eee" strokeWidth="2"/>
            </Svg>
        </RailButton>
        <RailLine/>
        <RailButton aria-label="兑换"><Icon name="swap" size={18}/></RailButton>
        <Spacer/>
        <RailButton aria-label="布局"><Icon name="windows" size={18}/></RailButton>
        <RailButton aria-label="客服"><Icon name="headset" size={18}/></RailButton>
        <Robot aria-label="助手">
            <svg viewBox="0 0 24 17" width="24" height="17">
                <path d="M1 17V8Q0 2 2 1l4 2h12l4-2q2 1 1 7v9z" fill="#d9dcf4"/>
                <rect x="4" y="6" width="16" height="14" rx="5" fill="#242852"/>
                <path d="M9 11v3M15 11v3" stroke="#fff" strokeWidth="3" strokeLinecap="round"/>
            </svg>
        </Robot>
    </Rail>
)

const Watermark = styled.div`
    position: fixed;
    right: 7px;
    bottom: 11px;
    display: flex;
    align-items: center;
    gap: 4px;
    font: 24px/34px "Noto Sans CJK SC", sans-serif;
    color: rgba(240, 240, 240, .9);
    pointer-events: none;
    z-index: 3;
`

export default () => (
    <Page>
        <GlobalStyle/>
        <LeftNav/>
        <Splitter>
            <Handle $side="left" aria-label="展开左栏"><svg viewBox="0 0 8 8"><path d="M2 0l4 4-4 4z"/></svg></Handle>
        </Splitter>
        <Main>
            <Header/>
            <DrawingTools/>
            <Chart>
                <PricePane/>
                <VolumePane/>
                <MacdPane/>
                <TimeAxis/>
            </Chart>
            <Footer/>
            <Floor>
                <Handle $side="bottom" aria-label="展开底栏"><svg viewBox="0 0 8 8"><path d="M0 6l4-4 4 4z"/></svg></Handle>
            </Floor>
        </Main>
        <Splitter>
            <Handle $side="right" aria-label="展开右栏"><svg viewBox="0 0 8 8"><path d="M6 0L2 4l4 4z"/></svg></Handle>
        </Splitter>
        <RightRail/>
        <Watermark>
            <svg viewBox="0 0 28 28" width="28" height="28" fill="currentColor">
                <path d="m14 0 8 8-3 3-5-5-5 5-3-3zM14 28l8-8-3-3-5 5-5-5-3 3zM14 11l3 3-3 3-3-3zM3 11l3 3-3 3-3-3zM25 11l3 3-3 3-3-3z"/>
            </svg>
            <span>@ Btc反方向的猫</span>
        </Watermark>
    </Page>
)
